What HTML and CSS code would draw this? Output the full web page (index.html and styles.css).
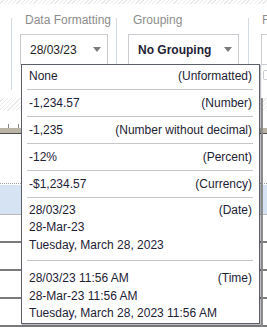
FILE: index.html
```html
<!DOCTYPE html>
<html>
	<head>
		<meta charset="utf-8">
		<link rel="stylesheet" href="styles.css">
	</head>

	<body>
		<div class="hatch top"></div>

		<header class="ribbon">
			<span class="sep first"></span>
			<div class="group format">
				<span class="label">Data Formatting</span>
				<div class="combo">
					<span>28/03/23</span>
					<i class="arrow"></i>
				</div>
			</div>
			<span class="sep"></span>
			<div class="group grouping">
				<span class="label">Grouping</span>
				<div class="combo">
					<strong>No Grouping</strong>
					<i class="arrow"></i>
				</div>
			</div>
			<span class="sep"></span>
			<div class="group more">
				<span class="label">F</span>
				<div class="combo"></div>
				<span class="check"></span>
			</div>
		</header>

		<section class="sheet">
			<div class="hatch band"></div>
			<div class="ruler"><i></i><i></i></div>
			<div class="bar"></div>
			<div class="blank"></div>
			<div class="selected"></div>
			<div class="rows">
				<div></div>
				<div></div>
				<div></div>
				<div></div>
			</div>
		</section>

		<ul class="menu">
			<li class="item first"><span>None</span><span>(Unformatted)</span></li>
			<li class="rule"></li>
			<li class="item"><span>-1,234.57</span><span>(Number)</span></li>
			<li class="rule"></li>
			<li class="item"><span>-1,235</span><span>(Number without decimal)</span></li>
			<li class="rule"></li>
			<li class="item"><span>-12%</span><span>(Percent)</span></li>
			<li class="rule"></li>
			<li class="item"><span>-$1,234.57</span><span>(Currency)</span></li>
			<li class="rule"></li>
			<li class="item multi">
				<span>28/03/23</span><span>(Date)</span>
				<span class="wide">28-Mar-23</span>
				<span class="wide">Tuesday, March 28, 2023</span>
			</li>
			<li class="rule"></li>
			<li class="item multi last">
				<span>28/03/23 11:56 AM</span><span>(Time)</span>
				<span class="wide">28-Mar-23 11:56 AM</span>
				<span class="wide">Tuesday, March 28, 2023 11:56 AM</span>
			</li>
		</ul>
	</body>
</html>
```

FILE: styles.css
```css
:root {
	box-sizing: border-box;
}

*, *::before, *::after {
	box-sizing: inherit;
}

body {
	margin: 0;
	width: 267px;
	height: 329px;
	overflow: hidden;
	position: relative;
	background: #fff;
	font-family: "Liberation Sans", Arial, sans-serif;
	font-size: 12px;
	color: #222;
}

.hatch {
	background: repeating-linear-gradient(135deg, #fff 0 2px, #e9e9e9 2px 3px);

	&.top { height: 4px; }
	&.band { height: 13px; }
}

/* ribbon */

.ribbon {
	display: flex;
	align-items: flex-start;
	height: 94px;
	padding-top: 9px;

	& > .sep {
		flex: none;
		width: 1px;
		height: 72px;
		margin-top: 5px;
		background: #d5dbe3;

		&.first { margin-left: 11px; }
	}
}

.group {
	display: flex;
	flex-direction: column;
	gap: 7px;
	flex: none;

	& > .label {
		line-height: 14px;
		padding-left: 5px;
		color: #8c8c8c;
		white-space: nowrap;
	}

	&.format {
		width: 88px;
		margin-left: 8px;
		margin-right: 8px;
	}

	&.grouping {
		width: 111px;
		margin-left: 11px;
		margin-right: 9px;
	}

	&.more {
		flex: 1;
		margin-left: 12px;

		& > .label { padding-left: 1px; }
		& > .combo { border-right: 0; }
	}
}

.combo {
	display: flex;
	align-items: center;
	justify-content: space-between;
	height: 31px;
	padding: 0 6px 0 9px;
	border: 1px solid #c9ccd1;
	background: #fff;
	color: #222;

	& strong {
		font-weight: bold;
		color: #1e2235;
	}

	& > .arrow {
		width: 0;
		height: 0;
		border-left: 4px solid transparent;
		border-right: 4px solid transparent;
		border-top: 5px solid #7c7c7c;
	}
}

.check {
	width: 10px;
	height: 10px;
	margin: -2px 0 0 2px;
	border: 1px solid #c9ccd1;
	border-radius: 2px;
}

/* sheet behind the menu */

.sheet {
	position: relative;

	&::after {
		content: "";
		position: absolute;
		top: 0;
		bottom: 0;
		left: 261px;
		width: 2px;
		background: #8d8d8d;
	}
}

.ruler {
	display: flex;
	align-items: flex-end;
	gap: 9px;
	height: 17px;
	padding-left: 8px;

	& > i {
		width: 1px;
		height: 4px;
		background: #8a8a8a;
	}
}

.bar {
	height: 6px;
	background: #b9b4a4;
	border-bottom: 1px solid #4d4d4d;
}

.blank {
	height: 50px;
	border-bottom: 1px dotted #a0a0a0;
}

.selected {
	height: 30px;
	margin-top: 1px;
	background: #d5e3f2;
	border-bottom: 1px solid #b9b9b9;
}

.rows > div {
	height: 28px;
	border-bottom: 2px solid #7a7a7a;
}

/* dropdown list */

.menu {
	position: absolute;
	left: 21px;
	top: 64px;
	width: 239px;
	margin: 0;
	padding: 0;
	list-style: none;
	background: #fff;
	border: 1px solid #5b5f6a;
	box-shadow: 1px 1px 1px rgba(0, 0, 0, 0.25);
	color: #1e2235;

	& > .rule {
		height: 1px;
		margin: 0 6px 0 5px;
		background: #c6c6c6;
	}
}

.item {
	display: flex;
	justify-content: space-between;
	padding: 4px 7px;
	line-height: 18px;
	white-space: nowrap;

	&.first { padding-top: 2px; }

	&.multi {
		display: grid;
		grid-template-columns: 1fr auto;
		line-height: 17.5px;
		padding-top: 3.5px;
		padding-bottom: 6px;

		& > .wide { grid-column: 1 / -1; }
	}

	&.last {
		padding-top: 9px;
		padding-bottom: 0;
	}
}
```
